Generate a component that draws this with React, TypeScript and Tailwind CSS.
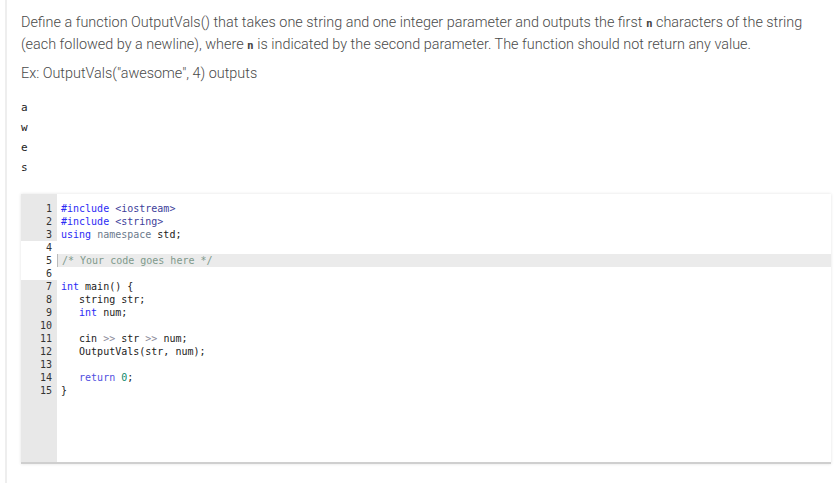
import React from "react";

type Tok = [string, string];

const kw = "text-[#2b2bf5]";
const inc = "text-[#40409a]";
const plain = "text-[#222]";
const muted = "text-[#6b7a8c]";
const op = "text-[#8a8a9a]";

const lines: { toks: Tok[]; ro: boolean; hl?: boolean }[] = [
  { toks: [["#include", kw], [" ", plain], ["<iostream>", inc]], ro: true },
  { toks: [["#include", kw], [" ", plain], ["<string>", inc]], ro: true },
  { toks: [["using", kw], [" ", plain], ["namespace", muted], [" std;", plain]], ro: true },
  { toks: [], ro: false },
  { toks: [["/* Your code goes here */", "text-[#7f9a8c]"]], ro: false, hl: true },
  { toks: [], ro: false },
  { toks: [["int", kw], [" main() {", plain]], ro: true },
  { toks: [["   string str;", plain]], ro: true },
  { toks: [["   ", plain], ["int", kw], [" num;", plain]], ro: true },
  { toks: [], ro: true },
  { toks: [["   cin ", plain], [">>", op], [" str ", plain], [">>", op], [" num;", plain]], ro: true },
  { toks: [["   OutputVals(str, num);", plain]], ro: true },
  { toks: [], ro: true },
  { toks: [["   ", plain], ["return", "text-[#5050e0]"], [" ", plain], ["0", "text-[#0f8a6a]"], [";", plain]], ro: true },
  { toks: [["}", plain]], ro: true },
];

const mono = "font-['DejaVu_Sans_Mono',monospace]";
const code = `${mono} text-[11px] leading-none font-bold text-[#444]`;

export default function App() {
  return (
    <div className="w-[835px] h-[483px] bg-white overflow-hidden pl-[5px]">
      <div className="h-full border-l-2 border-[#eeeeee] pl-[14px] pt-[12px]">
        <div className="w-[795px] font-['Roboto',sans-serif] font-light text-[14.4px] leading-[22px] text-[#4a4a4a]">
          <p>
            Define a function OutputVals() that takes one string and one integer parameter and outputs the first{" "}
            <span className={code}>n</span> characters of the string (each followed by a newline), where{" "}
            <span className={code}>n</span> is indicated by the second parameter. The function should not return any
            value.
          </p>
          <p className="mt-[7px]">Ex: OutputVals("awesome", 4) outputs</p>
        </div>

        <div className={`${mono} text-[11px] leading-[20px] text-[#222] mt-[13px]`}>
          <div>a</div>
          <div>w</div>
          <div>e</div>
          <div>s</div>
        </div>

        <div
          className={`${mono} mt-[16px] w-[810px] h-[270px] flex flex-col bg-white border-b-2 border-[#cfcfcf] shadow-[0_0_3px_rgba(0,0,0,0.12)] text-[10px] leading-[13px]`}
        >
          <div className="flex h-[8px] shrink-0">
            <div className="w-[36px] bg-[#e8e8e8]" />
          </div>
          {lines.map((l, i) => (
            <div key={i} className="flex h-[13px] shrink-0">
              <div
                className={`w-[36px] shrink-0 pr-[5px] text-right text-[#333] ${l.ro ? "bg-[#e8e8e8]" : "bg-white"}`}
              >
                {i + 1}
              </div>
              <div className={`flex-1 pl-[4px] whitespace-pre ${l.hl ? "bg-[#ebebeb] border-l border-[#bbb]" : ""}`}>
                {l.toks.map((t, j) => (
                  <span key={j} className={t[1]}>
                    {t[0]}
                  </span>
                ))}
              </div>
            </div>
          ))}
          <div className="flex flex-1">
            <div className="w-[36px] bg-[#e8e8e8]" />
          </div>
        </div>
      </div>
    </div>
  );
}
